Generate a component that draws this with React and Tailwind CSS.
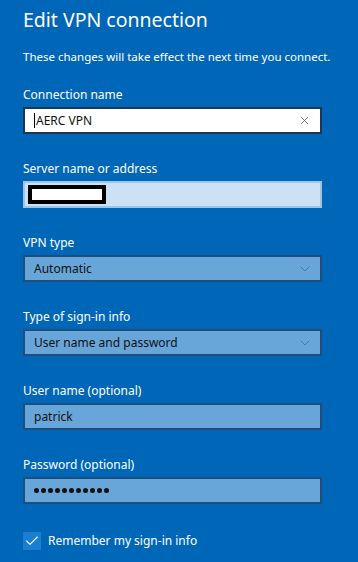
import { X, ChevronDown, Check } from "lucide-react";

const font = { fontFamily: '"Noto Sans", "Open Sans", sans-serif' };

const Label = ({ children }) => (
  <div className="text-[12px] leading-[16px] text-white mb-[4px]">{children}</div>
);

const Field = ({ className = "", children }) => (
  <div className={`w-[299px] h-[27px] flex items-center px-[9px] text-[12px] text-[#111] ${className}`}>
    {children}
  </div>
);

const Dropdown = ({ value }) => (
  <Field className="bg-[#68a5d8] border-2 border-[#1d4e7e] justify-between">
    <span>{value}</span>
    <ChevronDown size={16} strokeWidth={1.2} className="text-[#3c6f9f] mr-[-2px]" />
  </Field>
);

export default function App() {
  return (
    <div className="w-[358px] h-[562px] bg-[#0067b8] overflow-hidden pl-[23px] pt-[7px]" style={font}>
      <h1 className="text-[19.5px] leading-[26px] text-white font-normal">Edit VPN connection</h1>
      <p className="mt-[16px] text-[11.5px] leading-[16px] text-white whitespace-nowrap">
        These changes will take effect the next time you connect.
      </p>

      <div className="mt-[22px] flex flex-col gap-[27px]">
        <div>
          <Label>Connection name</Label>
          <Field className="bg-white border-2 border-[#1b3656] justify-between">
            <span className="flex items-center">
              <span className="w-px h-[15px] bg-black mr-[1px]" />
              AERC VPN
            </span>
            <X size={13} strokeWidth={1.3} className="text-[#444]" />
          </Field>
        </div>

        <div>
          <Label>Server name or address</Label>
          <Field className="bg-[#cbe2f6] border-2 border-[#9ec5e6] pl-[3px]">
            <div className="w-[78px] h-[19px] border-[4px] border-black bg-white" />
          </Field>
        </div>

        <div>
          <Label>VPN type</Label>
          <Dropdown value="Automatic" />
        </div>

        <div>
          <Label>Type of sign-in info</Label>
          <Dropdown value="User name and password" />
        </div>

        <div>
          <Label>User name (optional)</Label>
          <Field className="bg-[#68a5d8] border-2 border-[#1d4e7e]">patrick</Field>
        </div>

        <div>
          <Label>Password (optional)</Label>
          <Field className="bg-[#68a5d8] border-2 border-[#1d4e7e] gap-[2px]">
            {Array.from({ length: 11 }).map((_, i) => (
              <span key={i} className="w-[5px] h-[5px] rounded-full bg-[#111]" />
            ))}
          </Field>
        </div>
      </div>

      <div className="mt-[28px] flex items-center gap-[7px]">
        <div className="w-[18px] h-[18px] bg-[#1a7fd1] flex items-center justify-center">
          <Check size={16} strokeWidth={1.6} className="text-white" />
        </div>
        <span className="text-[12px] text-white">Remember my sign-in info</span>
      </div>
    </div>
  );
}
